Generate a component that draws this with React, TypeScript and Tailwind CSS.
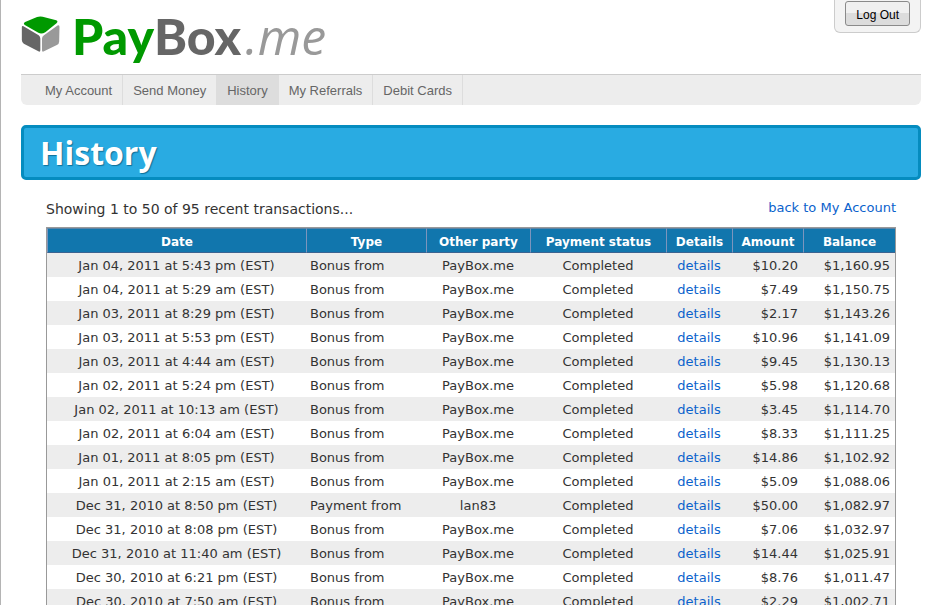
const tabs = ["My Account", "Send Money", "History", "My Referrals", "Debit Cards"];

const columns = [
  { name: "Date", width: "" },
  { name: "Type", width: "w-[120px]" },
  { name: "Other party", width: "w-[104px]" },
  { name: "Payment status", width: "w-[136px]" },
  { name: "Details", width: "w-[66px]" },
  { name: "Amount", width: "w-[71px]" },
  { name: "Balance", width: "w-[92px]" },
];

const transactions = [
  { date: "Jan 04, 2011 at 5:43 pm (EST)", amount: "$10.20", balance: "$1,160.95" },
  { date: "Jan 04, 2011 at 5:29 am (EST)", amount: "$7.49", balance: "$1,150.75" },
  { date: "Jan 03, 2011 at 8:29 pm (EST)", amount: "$2.17", balance: "$1,143.26" },
  { date: "Jan 03, 2011 at 5:53 pm (EST)", amount: "$10.96", balance: "$1,141.09" },
  { date: "Jan 03, 2011 at 4:44 am (EST)", amount: "$9.45", balance: "$1,130.13" },
  { date: "Jan 02, 2011 at 5:24 pm (EST)", amount: "$5.98", balance: "$1,120.68" },
  { date: "Jan 02, 2011 at 10:13 am (EST)", amount: "$3.45", balance: "$1,114.70" },
  { date: "Jan 02, 2011 at 6:04 am (EST)", amount: "$8.33", balance: "$1,111.25" },
  { date: "Jan 01, 2011 at 8:05 pm (EST)", amount: "$14.86", balance: "$1,102.92" },
  { date: "Jan 01, 2011 at 2:15 am (EST)", amount: "$5.09", balance: "$1,088.06" },
  { date: "Dec 31, 2010 at 8:50 pm (EST)", type: "Payment from", party: "lan83", amount: "$50.00", balance: "$1,082.97" },
  { date: "Dec 31, 2010 at 8:08 pm (EST)", amount: "$7.06", balance: "$1,032.97" },
  { date: "Dec 31, 2010 at 11:40 am (EST)", amount: "$14.44", balance: "$1,025.91" },
  { date: "Dec 30, 2010 at 6:21 pm (EST)", amount: "$8.76", balance: "$1,011.47" },
  { date: "Dec 30, 2010 at 7:50 am (EST)", amount: "$2.29", balance: "$1,002.71" },
];

function Logo() {
  return (
    <a href="#" className="flex items-start pt-2 font-['Lato',sans-serif] text-[50px] leading-14">
      <svg viewBox="0 0 117 112" className="mt-2 mr-3 h-[37px] w-[39px]" aria-hidden="true">
        <path d="M12 18 48 3Q56 0 65 2L106 13Q113 16 107 22L73 49Q62 56 52 51L11 27Q5 22 12 18Z" fill="#090" />
        <path d="M7 31 53 58Q58 62 58 68V103Q58 110 52 107L8 84Q2 80 2 73V34Q2 28 7 31Z" fill="#666" />
        <path d="M110 29 69 58Q63 62 63 69V103Q63 110 69 107L108 88Q115 84 115 77L116 33Q116 26 110 29Z" fill="#999" />
      </svg>
      <span className="font-black text-[#009900]">Pay</span>
      <span className="font-black text-[#666666]">Box</span>
      <span className="ml-1 font-['Open_Sans',sans-serif] font-normal text-[#999999] italic">.me</span>
    </a>
  );
}

export default function App() {
  return (
    <div className="h-screen overflow-hidden border-l border-[#b4b4b4] bg-white px-5 font-['DejaVu_Sans',sans-serif] text-[13px] text-[#333333]">
      <header className="flex h-[74px] items-start justify-between">
        <Logo />
        <div className="rounded-b-md border border-t-0 border-[#cccccc] bg-[#f3f3f3] px-2.5 pt-px pb-1.5">
          <button className="h-[25px] rounded-[3px] border border-[#8a8a8a] bg-linear-to-b from-[#f0f0f0] from-50% to-[#dcdcdc] to-50% px-2.5 pt-0.5 font-['Liberation_Sans',sans-serif] text-xs text-black">
            Log Out
          </button>
        </div>
      </header>

      <nav className="flex h-[31px] rounded-b-md border-t border-[#cccccc] bg-[#ededed] pl-3.5 font-['Liberation_Sans',sans-serif] text-[13px] leading-8 text-[#666666]">
        {tabs.map((tab) => (
          <a
            key={tab}
            href="#"
            className={tab === "History" ? "h-[30px] border-r border-[#dddddd] bg-[#dddddd] px-2.5" : "h-[30px] border-r border-[#dddddd] px-2.5"}
          >
            {tab}
          </a>
        ))}
      </nav>

      <h1 className="mt-5 h-[55px] rounded-[5px] border-3 border-[#058cbf] bg-[#29abe2] px-4 font-['Open_Sans',sans-serif] text-[32px] leading-[50px] font-bold text-white [text-shadow:1px_1px_1px_#0d6f99]">
        History
      </h1>

      <main className="px-[25px] pt-4">
        <div className="flex h-[31px] justify-between">
          <p className="text-[14px] leading-[26px]">Showing 1 to 50 of 95 recent transactions...</p>
          <a href="#" className="leading-6 text-[#0b62cc]">back to My Account</a>
        </div>
        <table className="w-full table-fixed border-separate border-spacing-0 border border-[#999999]">
          <thead>
            <tr className="h-[25px] bg-[#1176ad] text-white">
              {columns.map((col) => (
                <th key={col.name} className={`${col.width} border-t border-l border-t-[#5f84a5] border-l-[#7c95bd] border-b border-b-[#3a6391] p-0 pt-0.5 text-xs`}>
                  {col.name}
                </th>
              ))}
            </tr>
          </thead>
          <tbody>
            {transactions.map((t) => (
              <tr key={t.date} className="h-6 odd:bg-[#ededed]">
                <td className="p-0 pt-0.5 text-center">{t.date}</td>
                <td className="p-0 pt-0.5 pl-1">{t.type || "Bonus from"}</td>
                <td className="p-0 pt-0.5 text-center">{t.party || "PayBox.me"}</td>
                <td className="p-0 pt-0.5 text-center">Completed</td>
                <td className="p-0 pt-0.5 text-center">
                  <a href="#" className="text-[#0b62cc]">details</a>
                </td>
                <td className="p-0 pt-0.5 pr-[5px] text-right">{t.amount}</td>
                <td className="p-0 pt-0.5 pr-[5px] text-right">{t.balance}</td>
              </tr>
            ))}
          </tbody>
        </table>
      </main>
    </div>
  );
}
